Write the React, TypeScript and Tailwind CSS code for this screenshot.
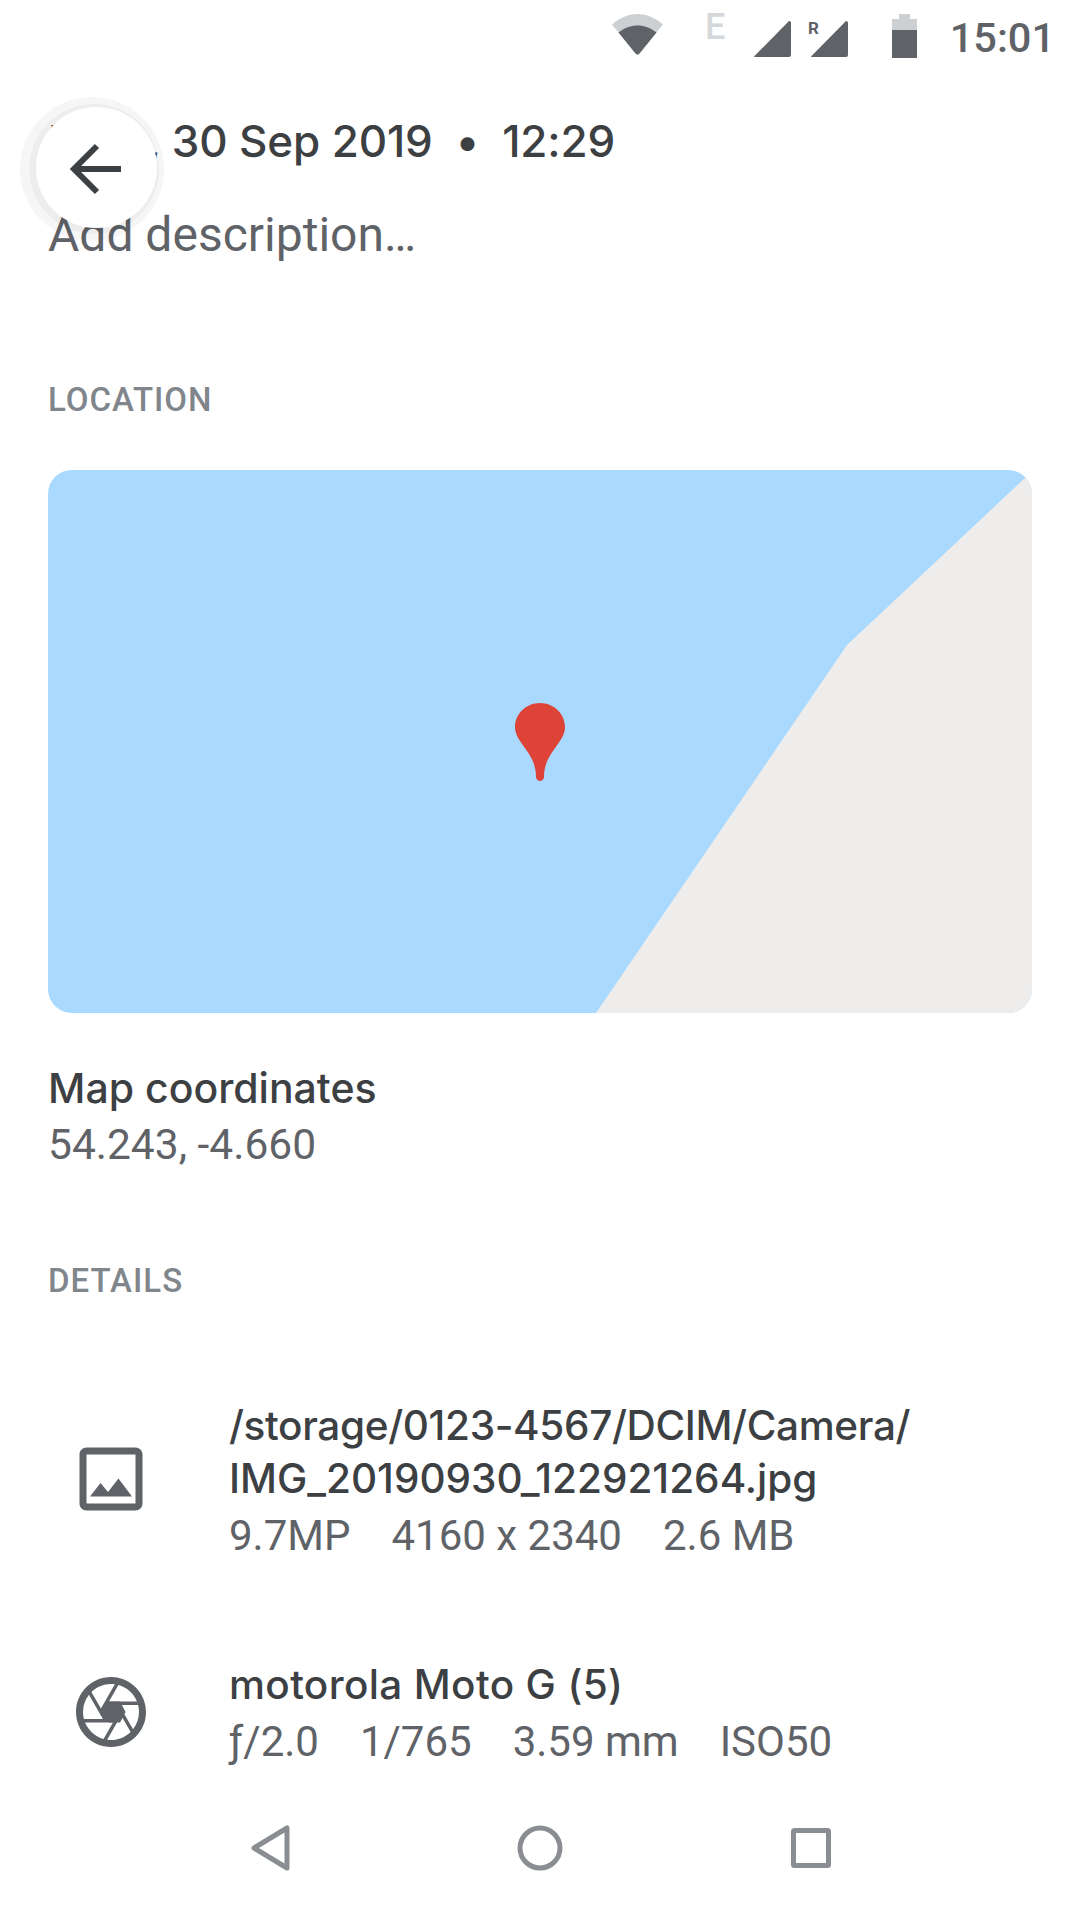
function StatusBar() {
  return (
    <div className="flex h-[72px] shrink-0 items-start justify-end">
      <svg width="480" height="72" viewBox="0 0 480 72" className="shrink-0">
        {/* wifi */}
        <path d="M12 24.5C20 17 30 14 37.5 14S55 17 63 24.5L39.5 53.5a2.5 2.5 0 0 1-4 0Z" fill="#cdd0d2" />
        <path d="M18.5 32.5C24 28 31 25.5 37.5 25.5S51 28 56.5 32.5L39.5 53.5a2.5 2.5 0 0 1-4 0Z" fill="#5f6368" />
        {/* signal */}
        <path d="M154 56.5L188 22a1.6 1.6 0 0 1 3 1V55a2 2 0 0 1-2 2H155a1 1 0 0 1-1-.5Z" fill="#5f6368" />
        <path d="M211 56.5L245 22a1.6 1.6 0 0 1 3 1V55a2 2 0 0 1-2 2H212a1 1 0 0 1-1-.5Z" fill="#5f6368" />
        {/* battery */}
        <path d="M299 14H310V19H317V30H292V19H299Z" fill="#cdd0d2" />
        <rect x="292" y="30" width="25" height="28" fill="#5f6368" />
      </svg>
      <span className="absolute left-[705px] top-[6px] text-[36px] leading-[42px] font-medium text-[#d5d8da]">E</span>
      <span className="absolute left-[808px] top-[17px] text-[17px] leading-[22px] font-bold text-[#5f6368]">R</span>
      <span className="absolute right-[25px] top-[14px] text-[41.5px] leading-[48px] font-medium text-[#5f6368]">15:01</span>
    </div>
  );
}

function BackButton() {
  return (
    <div className="absolute left-[20px] top-[97px] flex h-[144px] w-[144px] items-center justify-center rounded-full bg-[#000014]/[0.035]">
      <div className="ml-[4px] flex h-[130px] w-[130px] items-center justify-center rounded-full bg-black/[0.035]">
        <div className="mb-[4px] ml-[5px] flex h-[121px] w-[121px] items-center justify-center rounded-full bg-white">
          <svg width="54" height="52" viewBox="0 0 54 52" fill="none" stroke="#3c4043" strokeWidth="6" className="mt-[3px]">
            <path d="M51 26H5M27 3L4 26l23 23" />
          </svg>
        </div>
      </div>
    </div>
  );
}

function MapCard() {
  return (
    <div className="relative h-[543px] w-[984px] overflow-hidden rounded-[24px] bg-[#a9d9fe]">
      <svg width="984" height="543" viewBox="0 0 984 543" className="block">
        <path d="M977 8L799 175 548 543H984V0Z" fill="#eeedeb" />
      </svg>
      <svg width="50" height="78" viewBox="0 0 50 78" className="absolute left-[467px] top-[233px]">
        <path
          d="M25 0C11 0 0 11 0 24c0 9 6 15 12 24 5 7 9 15 9 26 0 2 2 4 4 4s4-2 4-4c0-11 4-19 9-26 6-9 12-15 12-24C50 11 39 0 25 0z"
          fill="#dd4337"
        />
      </svg>
    </div>
  );
}

function DetailRow({
  icon,
  lines,
  meta,
  className,
}: {
  icon: React.ReactNode;
  lines: React.ReactNode[];
  meta: string[];
  className?: string;
}) {
  return (
    <div className={`flex items-center ${className ?? ""}`}>
      <div className="mb-[5px] flex w-[229px] shrink-0 justify-center pr-[7px]">{icon}</div>
      <div>
        {lines.map((line, i) => (
          <div
            key={i}
            className="text-[40.5px] leading-[53px] font-medium text-[#3c4043]"
            style={{ fontFamily: "Inter, sans-serif" }}
          >
            {line}
          </div>
        ))}
        <div className="mt-[2px] flex gap-[41px] text-[42px] leading-[57px] text-[#5f6368]">
          {meta.map((item) => (
            <span key={item}>{item}</span>
          ))}
        </div>
      </div>
    </div>
  );
}

const imageIcon = (
  <svg width="84" height="84" viewBox="0 0 24 24" fill="#5f6368">
    <path d="M19 5v14H5V5h14m0-2H5c-1.1 0-2 .9-2 2v14c0 1.1.9 2 2 2h14c1.1 0 2-.9 2-2V5c0-1.1-.9-2-2-2zm-4.86 8.86l-3 3.87L9 13.14 6 17h12l-3.86-5.14z" />
  </svg>
);

const apertureIcon = (
  <svg width="84" height="84" viewBox="0 0 24 24" fill="#5f6368">
    <path d="M14.25 2.26l-.08-.04-.01.02C13.46 2.09 12.74 2 12 2 6.48 2 2 6.48 2 12s4.48 10 10 10 10-4.48 10-10c0-4.75-3.31-8.72-7.75-9.74zM19.41 9h-7.99l2.71-4.71c2.4.66 4.35 2.42 5.28 4.71zM13.1 4.08L10.27 9l-1.15 2L6.4 6.3C7.84 4.88 9.82 4 12 4c.37 0 .74.03 1.1.08zM5.7 7.09L8.54 12l1.15 2H4.26C4.1 13.36 4 12.69 4 12c0-1.85.64-3.55 1.7-4.91zM4.59 15h7.98l-2.71 4.7c-2.4-.67-4.34-2.42-5.27-4.7zm6.31 4.91L14.89 13l2.72 4.7C16.16 19.12 14.18 20 12 20c-.38 0-.74-.04-1.1-.09zm7.4-3L15.46 12l-1.15-2h5.43c.16.64.26 1.31.26 2 0 1.85-.64 3.55-1.7 4.91z" />
    <path d="M11.42 9h3.16l1.58 3-1.58 3h-3.16l-1.58-3z" />
  </svg>
);

function NavBar() {
  return (
    <div className="flex h-[132px] shrink-0 items-start justify-center bg-white pt-[30px]">
      <svg width="660" height="60" viewBox="0 0 660 60" fill="none" stroke="#8a8d91" strokeWidth="5" strokeLinejoin="round">
        <path d="M77 10v40L44 30Z" />
        <circle cx="330" cy="30" r="20" />
        <rect x="583.5" y="12.5" width="35" height="35" rx="1" />
      </svg>
    </div>
  );
}

export default function App() {
  return (
    <div
      className="relative flex h-[1920px] w-[1080px] flex-col overflow-hidden bg-white"
      style={{ fontFamily: "Roboto, sans-serif" }}
    >
      <StatusBar />
      <div className="min-h-0 flex-1 overflow-hidden pl-[48px]">
        <div
          className="mt-[41px] text-[44px] leading-[56px] font-medium tracking-[-0.15px] whitespace-pre text-[#3c4043]"
          style={{ fontFamily: "Inter, sans-serif" }}
        >
          <span className="mr-[-5px] tracking-[2.2px]">Mon, </span>30 Sep 2019  •  12:29
        </div>
        <div className="mt-[38px] text-[48px] leading-[56px] text-[#5f6368]">Add description…</div>
        <div className="mt-[119px] text-[33px] leading-[36px] font-medium tracking-[1px] text-[#80868b]">LOCATION</div>
        <div className="mt-[52px]">
          <MapCard />
        </div>
        <div
          className="mt-[47px] text-[41px] leading-[56px] font-medium text-[#3c4043]"
          style={{ fontFamily: "Inter, sans-serif" }}
        >
          Map coordinates
        </div>
        <div className="text-[42.5px] leading-[58px] text-[#5f6368]">54.243, -4.660</div>
        <div className="mt-[89px] text-[33px] leading-[36px] font-medium tracking-[1px] text-[#80868b]">DETAILS</div>
        <div className="-ml-[48px] mt-[100px]">
          <DetailRow
            icon={imageIcon}
            lines={[
              <span className="tracking-[-0.35px]">/storage/0123-4567/DCIM/Camera/</span>,
              "IMG_20190930_122921264.jpg",
            ]}
            meta={["9.7MP", "4160 x 2340", "2.6 MB"]}
          />
          <DetailRow
            className="mt-[94px]"
            icon={apertureIcon}
            lines={[<span className="tracking-[0.35px]">motorola Moto G (5)</span>]}
            meta={["ƒ/2.0", "1/765", "3.59 mm", "ISO50"]}
          />
        </div>
      </div>
      <NavBar />
      <BackButton />
    </div>
  );
}
